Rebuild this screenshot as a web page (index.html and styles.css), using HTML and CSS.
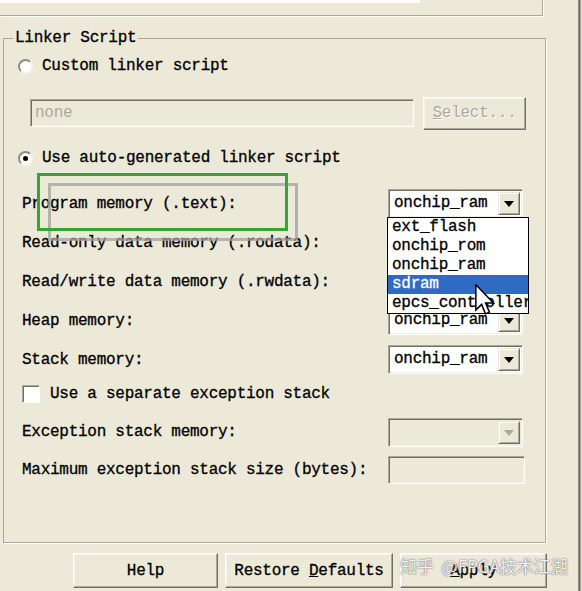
FILE: index.html
```html
<!DOCTYPE HTML><html>
<head>
  <title>Linker Script</title>
  <meta name="viewport" content="width=device-width, initial-scale=1">
  <link rel="stylesheet" href="styles.css">
</head>
<body>
  <div class="window">
    <div class="main">
      <div class="prev"><div class="prev-field"></div></div>
      <fieldset class="group">
        <legend>Linker Script</legend>
        <div class="row opt first"><span class="radio"></span><span>Custom linker script</span></div>
        <div class="row path-row">
          <div class="field field-off">none</div>
          <div class="btn btn-off"><span><u>S</u>elect...</span></div>
        </div>
        <div class="row opt auto"><span class="radio on"></span><span>Use auto-generated linker script</span></div>
        <div class="mem">
          <div class="mem-row"><span>Program memory (.text):</span><div class="combo"><span class="value">onchip_ram</span><i class="drop"></i></div></div>
          <div class="mem-row"><span>Read-only data memory (.rodata):</span><div class="combo"><span class="value">onchip_ram</span><i class="drop"></i></div></div>
          <div class="mem-row"><span>Read/write data memory (.rwdata):</span><div class="combo"><span class="value">onchip_ram</span><i class="drop"></i></div></div>
          <div class="mem-row"><span>Heap memory:</span><div class="combo"><span class="value">onchip_ram</span><i class="drop"></i></div></div>
          <div class="mem-row"><span>Stack memory:</span><div class="combo"><span class="value">onchip_ram</span><i class="drop"></i></div></div>
        </div>
        <div class="row chk-row"><span class="check"></span><span>Use a separate exception stack</span></div>
        <div class="mem-row exc"><span>Exception stack memory:</span><div class="combo combo-off"><span class="value"></span><i class="drop"></i></div></div>
        <div class="mem-row max"><span>Maximum exception stack size (bytes):</span><div class="field field-off size"></div></div>
      </fieldset>
      <div class="buttons">
        <div class="btn help"><span>Help</span></div>
        <div class="btn restore"><span>Restore <u>D</u>efaults</span></div>
        <div class="btn apply"><span><u>A</u>pply</span></div>
      </div>
    </div>
    <div class="edge"></div>

    <div class="mark gray"></div>
    <div class="mark green"></div>

    <ul class="list">
      <li>ext_flash</li>
      <li>onchip_rom</li>
      <li>onchip_ram</li>
      <li class="sel">sdram</li>
      <li>epcs_controller</li>
    </ul>

    <svg class="cursor" width="20" height="32" viewBox="0 0 13 21">
      <path d="M0.5 0.5 L0.5 17 L4.3 13.4 L6.8 19.6 L9.4 18.5 L6.9 12.4 L12 12.4 Z" fill="#fff" stroke="#000" stroke-width="1"/>
    </svg>

    <div class="watermark">知乎&nbsp; @FPGA技术江湖</div>
  </div>
</body>
</html>
```

FILE: styles.css
```css
body {
  margin: 0;
  background-color: #ECE9D8;
  font-family: "Liberation Mono", monospace;
  font-size: 16px;
  letter-spacing: -0.27px;
  color: #000;
  -webkit-text-stroke: 0.3px;
}
.window {
  position: relative;
  display: flex;
  width: 582px;
  height: 591px;
  overflow: hidden;
}
.main {
  width: 578px;
}
.edge {
  flex: 1;
  background: linear-gradient(to right, #9d9b8f, #6f6d64 40%, #cfcdc2 80%, #f4f3ee);
}
.prev {
  width: 542px;
  height: 15px;
  border-right: 1px solid #aca899;
  border-bottom: 1px solid #aca899;
  box-shadow: 1px 1px #fff;
}
.prev-field {
  width: 420px;
  height: 3px;
  background-color: #fff;
}

/* group box */
.group {
  margin: 13px 0 0 3px;
  padding: 0 0 54px 18px;
  width: 543px;
  box-sizing: border-box;
  border: 1px solid #aca899;
  box-shadow: 1px 1px #fff;
  min-inline-size: auto;
}
.group legend {
  margin-left: -9px;
  padding: 0 2px;
  line-height: 18px;
}
.row {
  display: flex;
  align-items: center;
}
.opt {
  height: 20px;
}
.first {
  margin-top: 9px;
}
.auto {
  margin-top: 18px;
}
.radio {
  position: relative;
  width: 15px;
  height: 15px;
  margin: 0 9px 0 -4px;
  box-sizing: border-box;
  border-radius: 50%;
  border: 2px solid;
  border-color: #8f8c80 #f4f3ee #f4f3ee #8f8c80;
  background-color: #fff;
}
.radio.on::after {
  content: "";
  position: absolute;
  left: 3px;
  top: 3px;
  width: 5px;
  height: 5px;
  border-radius: 50%;
  background-color: #000;
}
.path-row {
  margin-top: 20px;
  height: 34px;
}
.field {
  box-sizing: border-box;
  height: 28px;
  border: 1px solid;
  border-color: #aca899 #fff #fff #aca899;
  box-shadow: inset 1px 1px #716f64, inset -1px -1px #f1efe2;
  background-color: #fff;
}
.field-off {
  background-color: #ECE9D8;
  color: #aca899;
  -webkit-text-stroke: 0;
}
.path-row .field {
  margin-left: 8px;
  width: 384px;
  padding: 4px 0 0 4px;
}
.btn {
  box-sizing: border-box;
  display: flex;
  align-items: center;
  justify-content: center;
  border: 1px solid;
  border-color: #fff #716f64 #716f64 #fff;
  box-shadow: inset -1px -1px #aca899, inset 1px 1px #f4f3ee;
  background-color: #ECE9D8;
  white-space: pre;
}
.btn-off {
  margin-left: 9px;
  width: 103px;
  height: 33px;
  color: #aca899;
  text-shadow: 1px 1px #fff;
  -webkit-text-stroke: 0;
}

/* memory rows */
.mem {
  margin-top: 16px;
}
.mem-row {
  display: grid;
  grid-template-columns: 366px 135px;
  align-items: center;
  height: 39px;
}
.combo {
  display: flex;
  box-sizing: border-box;
  height: 29px;
  padding: 2px;
  border: 1px solid;
  border-color: #aca899 #fff #fff #aca899;
  box-shadow: inset 1px 1px #716f64, inset -1px -1px #f1efe2;
  background-color: #fff;
}
.combo .value {
  flex: 1;
  padding-left: 3px;
  line-height: 23px;
}
.drop {
  position: relative;
  width: 22px;
  box-sizing: border-box;
  border: 1px solid;
  border-color: #ECE9D8 #716f64 #716f64 #ECE9D8;
  box-shadow: inset 1px 1px #fff, inset -1px -1px #aca899;
  background-color: #ECE9D8;
}
.drop::after {
  content: "";
  position: absolute;
  left: 5px;
  top: 8px;
  border-left: 5px solid transparent;
  border-right: 5px solid transparent;
  border-top: 6px solid #000;
}
.combo-off {
  background-color: #ECE9D8;
}
.combo-off .drop::after {
  border-top-color: #aca899;
}
.chk-row {
  height: 30px;
}
.check {
  width: 18px;
  height: 18px;
  margin-right: 10px;
  box-sizing: border-box;
  border: 1px solid;
  border-color: #aca899 #fff #fff #aca899;
  box-shadow: inset 1px 1px #716f64;
  background-color: #fff;
}
.exc {
  margin-top: 4px;
  height: 38px;
}
.max {
  height: 37px;
}
.size {
  width: 137px;
}

/* bottom buttons */
.buttons {
  display: flex;
  gap: 7px;
  margin-top: 10px;
  padding-left: 73px;
}
.buttons .btn {
  height: 35px;
}
.help {
  width: 145px;
}
.restore {
  width: 168px;
}
.apply {
  width: 147px;
}

/* overlays */
.mark {
  position: absolute;
  box-sizing: border-box;
  border: 3px solid;
}
.gray {
  left: 48px;
  top: 183px;
  width: 250px;
  height: 58px;
  border-color: rgba(160, 160, 160, .75);
}
.green {
  left: 37px;
  top: 173px;
  width: 251px;
  height: 58px;
  border-color: #2faa2f;
}
.list {
  position: absolute;
  left: 387px;
  top: 217px;
  width: 140px;
  margin: 0;
  padding: 0;
  list-style: none;
  border: 1px solid #000;
  background-color: #fff;
  overflow: hidden;
  white-space: nowrap;
}
.list li {
  height: 19px;
  line-height: 19px;
  padding-left: 4px;
}
.list .sel {
  background-color: #316ac5;
  color: #fff;
}
.cursor {
  position: absolute;
  left: 475px;
  top: 284px;
}
.watermark {
  position: absolute;
  left: 400px;
  top: 553px;
  font-family: "Noto Sans CJK SC", sans-serif;
  font-size: 17px;
  letter-spacing: 0;
  color: rgba(255, 255, 255, .92);
  text-shadow: 0 0 1px #666, 0 0 2px #888;
  -webkit-text-stroke: 0;
}
```
